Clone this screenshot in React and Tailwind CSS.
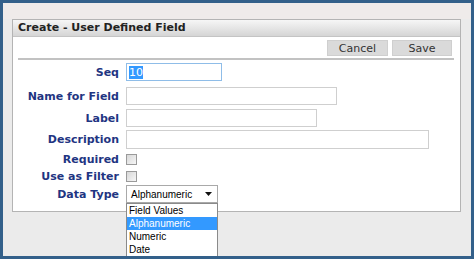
import React from "react"

const labelCls = "w-[106px] shrink-0 text-right text-[11px] font-bold text-[#1f3582] leading-none"

const Row = ({ label, children, className }) => (
    <div className={"flex items-center gap-[7px] " + className}>
        <div className={labelCls}>{label}</div>
        {children}
    </div>
)

const Checkbox = () => (
    <div className="w-[11px] h-[11px] border border-[#9a9a9a] bg-gradient-to-br from-[#d8d8d8] to-[#f6f6f6]"></div>
)

const App = () => {
    return (
        <div
            className="relative w-[474px] h-[259px] border-[3px] border-[#33608a] bg-[#ebebeb] overflow-hidden"
            style={{ fontFamily: "'DejaVu Sans', Verdana, sans-serif" }}>
            <div className="h-[16px] bg-[#efebea]"></div>
            <div className="ml-[9px] w-[449px] h-[193px] border border-[#b4b4b4] bg-white flex flex-col">
                {/* Titulo */}
                <div className="h-[17px] shrink-0 flex items-center px-[5px] bg-gradient-to-b from-[#f6f6f6] to-[#d5d5d5] border-b border-[#c4c4c4] text-[11px] font-bold text-[#222]">
                    Create - User Defined Field
                </div>
                {/* Botones */}
                <div className="flex justify-end gap-[4px] pr-[8px] mt-[3px]">
                    <button className="w-[61px] h-[16px] bg-[#dadada] border border-[#cfcfcf] text-[11px] text-[#333] leading-none">
                        Cancel
                    </button>
                    <button className="w-[60px] h-[16px] bg-[#dadada] border border-[#cfcfcf] text-[11px] text-[#333] leading-none">
                        Save
                    </button>
                </div>
                <div className="ml-[5px] mr-[6px] mt-[2px] h-[2px] bg-[#c2c2c2]"></div>

                {/* Formulario */}
                <Row label="Seq" className="mt-[3px] h-[18px]">
                    <div className="w-[96px] h-[18px] border border-[#8fbde8] bg-white flex items-center px-[2px]">
                        <span className="bg-[#3399ff] text-white text-[11px] leading-[13px]">10</span>
                    </div>
                </Row>
                <Row label="Name for Field" className="mt-[6px] h-[18px]">
                    <div className="w-[211px] h-[18px] border border-[#cfcfcf] bg-white"></div>
                </Row>
                <Row label="Label" className="mt-[4px] h-[18px]">
                    <div className="w-[191px] h-[18px] border border-[#cfcfcf] bg-white"></div>
                </Row>
                <Row label="Description" className="mt-[3px] h-[19px]">
                    <div className="w-[303px] h-[19px] border border-[#cfcfcf] bg-white"></div>
                </Row>
                <Row label="Required" className="mt-[4px] h-[13px]">
                    <Checkbox />
                </Row>
                <Row label="Use as Filter" className="mt-[4px] h-[13px]">
                    <Checkbox />
                </Row>
                <Row label="Data Type" className="mt-[2px] h-[18px]">
                    <div
                        className="w-[92px] h-[18px] border border-[#a9a9a9] bg-white flex items-center justify-between pl-[4px] pr-[5px] text-[10px] text-black"
                        style={{ fontFamily: "'Liberation Sans', Arial, sans-serif" }}>
                        <span>Alphanumeric</span>
                        <svg width="7" height="4" viewBox="0 0 7 4">
                            <path d="M0 0h7L3.5 4z" fill="#111" />
                        </svg>
                    </div>
                </Row>
            </div>

            {/* Lista desplegable */}
            <div
                className="absolute left-[123px] top-[200px] w-[92px] border border-[#8a8a8a] bg-white text-[10px] text-black z-10"
                style={{ fontFamily: "'Liberation Sans', Arial, sans-serif" }}>
                <div className="h-[13px] leading-[13px] pl-[2px]">Field Values</div>
                <div className="h-[13px] leading-[13px] pl-[2px] bg-[#3399ff] text-white">Alphanumeric</div>
                <div className="h-[13px] leading-[13px] pl-[2px]">Numeric</div>
                <div className="h-[13px] leading-[13px] pl-[2px]">Date</div>
            </div>
        </div>
    )
}

export default App
